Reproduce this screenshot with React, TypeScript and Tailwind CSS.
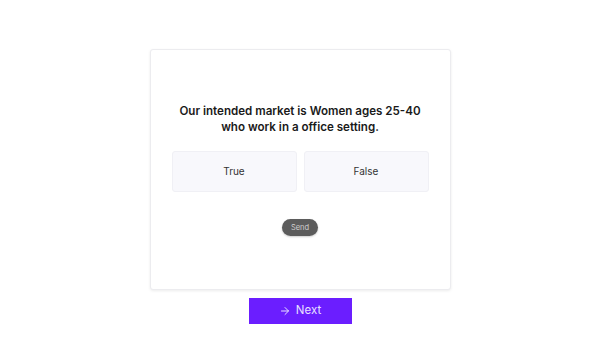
import React from 'react';
import { ArrowRight } from 'lucide-react';

export default function App() {
    return (
        <div className="w-[600px] h-[338px] bg-white flex flex-col items-center pt-[49px]" style={{ fontFamily: 'Inter, "Liberation Sans", sans-serif' }}>
            <div className="w-[301px] h-[241px] bg-white border border-[#ececef] rounded-[3px] shadow-[0_1px_3px_rgba(0,0,0,0.08)] flex flex-col items-center px-[21px] pt-[53px]">
                <h1 className="text-[11.6px] leading-[16px] font-semibold text-center text-[#1a1a1a] whitespace-nowrap">
                    Our intended market is Women ages 25-40
                    <br />
                    who work in a office setting.
                </h1>
                <div className="grid grid-cols-2 gap-[7px] w-full mt-[16px]">
                    <button className="h-[41px] bg-[#f8f8fc] border border-[#f0f0f5] rounded-[3px] text-[10px] text-[#333]">True</button>
                    <button className="h-[41px] bg-[#f8f8fc] border border-[#f0f0f5] rounded-[3px] text-[10px] text-[#333]">False</button>
                </div>
                <button className="mt-[27px] h-[17px] px-[9px] rounded-full bg-[#5c5c5c] text-[7.5px] text-[#d0d0d0] shadow-[0_1px_2px_rgba(0,0,0,0.2)]">Send</button>
            </div>
            <button className="mt-[8px] w-[103px] h-[26px] bg-[#6b1eff] text-[#e8e0ff] text-[11.5px] flex items-center justify-center gap-[5px]">
                <ArrowRight size={12} strokeWidth={2} />
                Next
            </button>
        </div>
    );
}
